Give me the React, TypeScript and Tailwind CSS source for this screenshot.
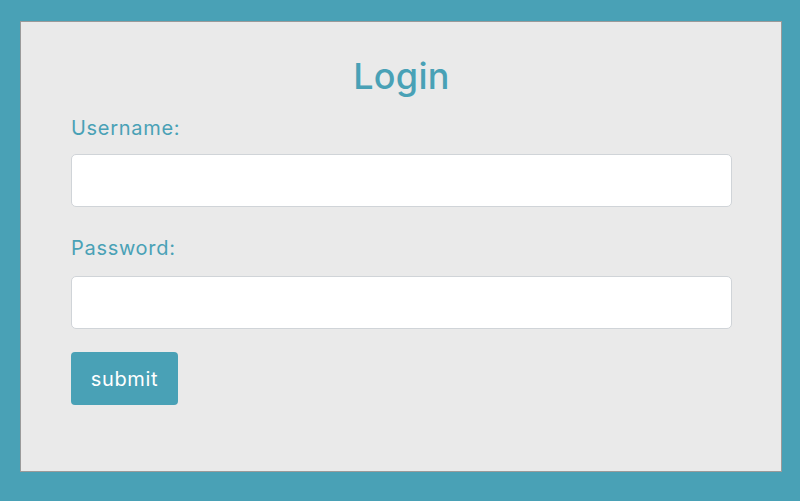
import React from "react";

export default function App() {
  return (
    <div
      className="w-[800px] h-[501px] bg-[#49a1b6] pt-[21px] pl-[20px]"
      style={{ fontFamily: "Inter, 'Noto Sans', sans-serif" }}
    >
      <div className="w-[762px] h-[451px] bg-[#eaeaea] border border-[#9a9a9a] pl-[50px] pr-[49px] pt-[27px]">
        <h1 className="text-center text-[36px] leading-[54px] text-[#49a1b6] font-medium tracking-[0.3px]">Login</h1>
        <label className="block mt-[10px] text-[20px] leading-[30px] text-[#49a1b6] tracking-[0.7px]">Username:</label>
        <input
          type="text"
          className="block mt-[11px] w-full h-[53px] bg-white border border-[#d0d4d8] rounded-[5px]"
        />
        <label className="block mt-[26px] text-[20px] leading-[30px] text-[#49a1b6] tracking-[0.7px]">Password:</label>
        <input
          type="password"
          className="block mt-[13px] w-full h-[53px] bg-white border border-[#d0d4d8] rounded-[5px]"
        />
        <button className="block mt-[23px] w-[107px] h-[53px] bg-[#49a1b6] text-white text-[20px] tracking-[0.7px] rounded-[4px]">
          submit
        </button>
      </div>
    </div>
  );
}
